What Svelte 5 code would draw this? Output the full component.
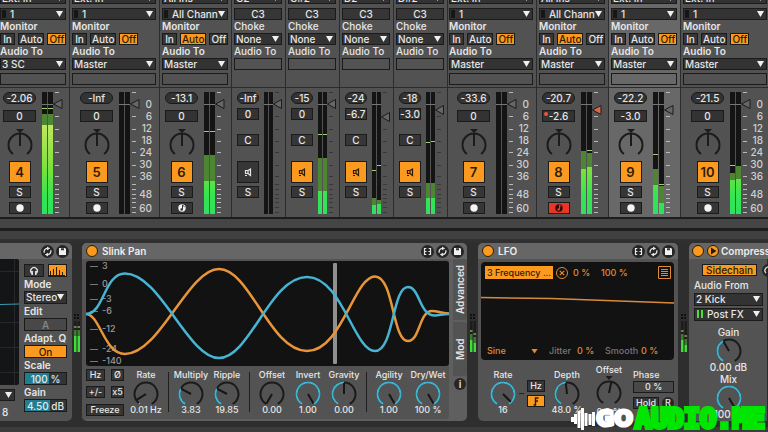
<script>
  const audio = (name, o) => ({ kind: 'audio', name, from: 'Ext. In', chan: '1', mon: 'Off', to: 'Master', pan: 0, fader: '0', fy: 12, l: {}, r: {}, ...o });
  const pad = (note, o) => ({ kind: 'pad', from: note, on: true, fader: '0', fy: 12, l: {}, r: {}, ...o });

  // Meter values are pixels below the top of the 122px meter: peak line, dim bar, bright bar.
  const tracks = [
    audio('4', { to: '3 SC', db: '-2.06', l: { p: 16, d: 22, b: 33 }, r: { p: 16, d: 22, b: 33 } }),
    audio('5', { db: '-Inf', wide: true }),
    audio('6', { from: 'All Ins', chan: 'All Channels', mon: 'Auto', midi: true, db: '-13.1', l: { p: 39, d: 63, b: 89 }, r: { p: 39, d: 63, b: 89 } }),
    pad('C2', { db: '-Inf', on: false }),
    pad('C#2', { db: '-15', l: { p: 42, d: 66, b: 99 }, r: { p: 42, d: 66, b: 99 } }),
    pad('D2', { db: '-24', fader: '-6.7', fy: 25, l: { p: 78, d: 106, b: 113 }, r: { p: 73, d: 108, b: 112 } }),
    pad('D#2', { db: '-18', fader: '-3.0', fy: 18, l: { p: 50, d: 91, b: 106 }, r: { p: 49, d: 91, b: 106 } }),
    audio('7', { db: '-33.6', wide: true }),
    audio('8', { from: 'All Ins', chan: 'All Channels', mon: 'Auto', midi: true, armed: true, auto: true, db: '-20.7', fader: '-2.6', fy: 18, l: { d: 59, b: 77 }, r: { p: 58, d: 61, b: 75 } }),
    audio('9', { db: '-22.2', fader: '-3.0', fy: 18, selected: true, l: { p: 62, d: 77, b: 93 }, r: { p: 92, d: 94, b: 111 } }),
    audio('10', { db: '-21.5', wide: true, l: { p: 73, d: 81, b: 88 }, r: { d: 74, b: 87 } })
  ];
  const scale = ['0', '6', '12', '18', '24', '30', '36', '48', '60'];
  const ticks = [0, 24, 37, 49, 60, 73, 84, 92, 97, 102, 106, 110, 115, 120];

  const pt = (a, r) => `${(Math.sin(a * Math.PI / 180) * r).toFixed(2)} ${(-Math.cos(a * Math.PI / 180) * r).toFixed(2)}`;
  const arc = (a, b, r = 11.5) => `M${pt(a, r)}A${r} ${r} 0 ${b - a > 180 ? 1 : 0} 1 ${pt(b, r)}`;

  const slink = [
    { n: 'Rate', v: '0.01 Hz', a: -122, f: -142 },
    null,
    { n: 'Multiply', v: '3.83', a: -62, f: -62 },
    { n: 'Ripple', v: '19.85', a: -62, f: -62 },
    null,
    { n: 'Offset', v: '0.00', a: -150 },
    { n: 'Invert', v: '1.00', a: 150, f: 150 },
    { n: 'Gravity', v: '0.00', a: 0, f: 0 },
    null,
    { n: 'Agility', v: '1.00', a: 150, f: 150 },
    { n: 'Dry/Wet', v: '100 %', a: 150, f: 150, wide: true }
  ];
  const grid = [['3', 5], ['0', 23], ['-3', 38], ['-6', 50], ['-12', 68], ['-24', 88], ['-140', 100]];
</script>

{#snippet select(label, value, led)}
  <span class="select">
    {#if led}<i class="led"></i>{/if}
    <select aria-label={label} class:indent={led}><option>{value}</option></select>
  </span>
{/snippet}

{#snippet dial(name, angle, fill)}
  <span class="dial">
    <svg viewBox="-13 -13 26 26" width="26" height="26">
      <path d={arc(-150, 150)} fill="none" stroke="#1b1b1b" stroke-width="2" />
      {#if fill !== undefined}<path d={arc(-150, fill)} fill="none" stroke="#3fb3cf" stroke-width="2" />{/if}
      <path d="M0 0L{pt(angle, 11)}" stroke="#161616" stroke-width="2" />
    </svg>
    <input type="range" min="-150" max="150" value={angle} aria-label={name} />
  </span>
{/snippet}

{#snippet knob(k)}
  <div class="knob" class:wide={k.wide}>
    <span>{k.n}</span>
    {@render dial(k.n, k.a, k.f)}
    <span>{k.v}</span>
  </div>
{/snippet}

{#snippet fit()}
  <button class="round" aria-label="Unfold">
    <svg viewBox="0 0 13 13"><path d="M5.300 3.500H3.500v6h1.800M7.700 3.500h1.800v6H7.700M3.500 6.500h2M7.500 6.500h2" fill="none" stroke="#e6e6e6" stroke-width="1.200" /></svg>
  </button>
{/snippet}

{#snippet tools()}
  <button class="round" aria-label="Hot-swap">
    <svg viewBox="0 0 13 13"><path d="M3.3 7.8A3.3 3.3 0 0 1 6.3 3.3M9.7 5.2a3.3 3.3 0 0 1-3 4.5" fill="none" stroke="#e6e6e6" stroke-width="1.3" /><path d="M6 1.4l3.2 2L6 5.3zM7 7.7v3.9l-3.2-2z" fill="#e6e6e6" /></svg>
  </button>
  <button class="round" aria-label="Save preset">
    <svg viewBox="0 0 13 13"><path d="M3 3h6l1 1v6H3z" fill="#f0f0f0" /><path d="M5 3.200h3v2H5z" fill="#333" /></svg>
  </button>
{/snippet}

{#snippet level(a, b)}
  <svg class="level" viewBox="0 0 8 40" width="8" height="40">
    <path d="M1 2h6M1 5h6" stroke="#111" stroke-width="2" stroke-dasharray="2 1" />
    <path d="M1 8h2.500v31H1zM4.500 8H7v31H4.500z" fill="#1c1c1c" />
    <path d="M1 {a - 6}h2.500v6H1zM4.500 {b - 6}H7v6H4.500z" fill="#3f7a32" />
    <path d="M1 {a}h2.500V39H1zM4.500 {b}H7V39H4.500z" fill="#3fdc3a" />
    <path d="M1 {a - 9}h2.500M4.500 {b - 9}H7" stroke="#cfe08a" />
  </svg>
{/snippet}

{#snippet channel(x, w, m)}
  {#if m.d}
    <rect {x} y={m.d} width={w} height={122 - m.d} fill="#4d8632" />
    <rect {x} y={m.b} width={w} height={122 - m.b} fill="url(#vu)" />
  {/if}
  {#if m.p}<rect {x} y={m.p} width={w} height="1" fill="#9fd070" />{/if}
{/snippet}

<div class="live">
  <main class="mixer">
    {#each tracks as t}
      <section class="track {t.kind}" class:wide={t.wide} class:selected={t.selected}>
        <div class="io">
          {@render select('Input type', t.from)}
          {#if t.kind === 'audio'}
            <div class="gap4">{@render select('Input channel', t.chan, true)}</div>
            <span class="cap">Monitor</span>
            <div class="monitor">
              {#each ['In', 'Auto', 'Off'] as m}<button class="btn" class:on={t.mon === m}>{m}</button>{/each}
            </div>
            <span class="cap">Audio To</span>
            {@render select('Output', t.to)}
            <div class="slot gap3"></div>
          {:else}
            <button class="btn gap4">C3</button>
            <span class="cap light">Choke</span>
            {@render select('Choke group', 'None')}
            <span class="cap light">Audio To</span>
            <div class="slot"></div>
          {/if}
        </div>
        <div class="mix">
          <div class="controls">
            <span class="pill">{t.db}</span>
            <span class="value">
              <input aria-label="Volume" value={t.fader} />
              {#if t.auto}<i class="dot"></i>{/if}
            </span>
            {#if t.kind === 'audio'}
              <span class="dial pan">
                <svg viewBox="-15 -17 30 30" width="30" height="30">
                  <path d={arc(-142, 142, 11.5)} fill="none" stroke="#1b1b1b" stroke-width="2" />
                  <path d="M0 1V-11" stroke="#1b1b1b" stroke-width="2" />
                  <path d="M-4-16h8l-4 4z" fill="#1b1b1b" />
                </svg>
                <input type="range" min="-50" max="50" value="0" aria-label="Pan" />
              </span>
              <button class="btn active on">{t.name}</button>
            {:else}
              <button class="btn send">C</button>
              <button class="btn active" class:on={t.on} aria-label="Pad on">
                <svg viewBox="0 0 12 12" width="12" height="12"><path d="M3.500 4.500h2.500v3H3.500zM6 4.500l2.500-1.500v6.500L6 7.500" fill="none" stroke="currentColor" stroke-width="1.200" /><path d="M3 9.500h2" stroke="currentColor" /></svg>
              </button>
            {/if}
            <button class="btn solo">S</button>
            {#if t.kind === 'audio'}
              <button class="btn rec" class:armed={t.armed} aria-label="Arm">
                <svg viewBox="0 0 10 10" width="10" height="10">
                  <circle cx="5" cy="5" r="3.700" fill="currentColor" />
                  {#if t.midi}<path d="M5.500 2v4.500M5.500 2.200l2 1.500" stroke={t.armed ? '#f03a2c' : '#333'} stroke-width="1" fill="none" /><circle cx="4.600" cy="6.500" r="1.200" fill={t.armed ? '#f03a2c' : '#333'} />{/if}
                </svg>
              </button>
            {/if}
          </div>
          <svg class="meter" width="22" height="122" viewBox="0 0 22 122">
            <defs>
              <linearGradient id="vu" gradientUnits="userSpaceOnUse" x1="0" x2="0" y1="30" y2="122">
                <stop offset="0" stop-color="#c4e660" /><stop offset=".5" stop-color="#7be23c" /><stop offset=".8" stop-color="#35e550" /><stop offset="1" stop-color="#2fe062" />
              </linearGradient>
            </defs>
            {#if t.kind === 'audio'}
              <path d="M0 0h5v122H0zM6 0h5v122H6z" fill="#141414" />
              {@render channel(0, 5, t.l)}
              {@render channel(6, 5, t.r)}
              {#each ticks as y}<rect x="13" {y} width="4" height="1" fill="#b9b9b9" />{/each}
              <path d="M0 12.500h11" stroke="#777" />
              <path d="M11.500 {t.fy}l8.500-4.500v9z" fill={t.auto ? '#d8694a' : '#666'} stroke="#1b1b1b" />
            {:else}
              <path d="M0 0h4v122H0zM5 0h4v122H5z" fill="#141414" />
              {@render channel(0, 4, t.l)}
              {@render channel(5, 4, t.r)}
              {#each ticks as y}<rect x="11" {y} width="4" height="1" fill="#383838" />{/each}
              <path d="M0 12.500h9" stroke="#777" />
              <path d="M9.500 {t.fy}l8-4.500v9z" fill="#666" stroke="#1b1b1b" />
            {/if}
          </svg>
          {#if t.wide}
            <div class="scale">{#each scale as s}<span>{s}</span>{/each}</div>
          {/if}
        </div>
      </section>
    {/each}
  </main>
  <div class="strip"></div>
  <div class="strip second"></div>

  <div class="devices">
    <section class="device eq">
      <header><span class="grow"></span>{@render tools()}</header>
      <div class="eqbody">
        <div class="eqleft">
          <svg viewBox="0 0 19 126" width="19" height="126">
            <path d="M0 0h17q2 0 2 2v122q0 2-2 2H0z" fill="#131516" />
            <path d="M14.500 0v126M0 12.500h19M0 63.500h19M0 88.500h19M0 113.500h19" stroke="#25292b" />
            <path d="M0 45.500L19 45" stroke="#3a9cb5" />
          </svg>
          <span class="arrowbox"></span>
          <span class="eight">8</span>
        </div>
        <div class="eqside">
          <div class="pair">
            <button class="btn" aria-label="Audition"><svg viewBox="0 0 12 12" width="12" height="12"><path d="M3.500 8A3.300 3.300 0 1 1 8.500 8" fill="none" stroke="#ddd" stroke-width="1.300" /><path d="M2.500 6h2.500v4H3.500zM7 6h2.500L8.500 10H7z" fill="#ddd" /></svg></button>
            <button class="btn on" aria-label="Analyzer"><svg viewBox="0 0 16 12" width="16" height="12"><path d="M1.500 10V6M4.500 10V4M7.500 10V2M10.500 10V5M13.500 10V7M0 10.500h16" stroke="#2b1c08" /></svg></button>
          </div>
          <span class="cap">Mode</span>
          {@render select('Mode', 'Stereo')}
          <span class="cap">Edit</span>
          <button class="btn off">A</button>
          <span class="cap">Adapt. Q</span>
          <button class="btn on">On</button>
          <span class="cap">Scale</span>
          <input class="bar" style="--fill:58%" value="100 %" aria-label="Scale" />
          <span class="cap">Gain</span>
          <input class="bar" style="--fill:62%" value="4.50 dB" aria-label="Gain" />
        </div>
      </div>
    </section>

    {@render level(23, 23)}

    <section class="device slink">
      <header>
        <button class="power" aria-label="Slink Pan on"></button><h2>Slink Pan</h2><span class="grow"></span>
        {@render fit()}{@render tools()}
      </header>
      <div class="slinkbody">
        <div class="panel">
          <svg viewBox="0 0 363 105" width="363" height="105">
            <rect width="363" height="105" rx="3" fill="#121212" />
            {#each grid as [g, y]}
              <path d="M4 {y + 0.5}h8" stroke="#777" /><text x="16" y={y + 3} font-size="9" fill="#9a9a9a">{g}</text>
            {/each}
            <rect x="247" y="2" width="4" height="101" rx="1" fill="#909090" />
            <g fill="none" stroke-width="2.500">
              <path stroke="#e8953a" d="M0 53C14 53 18 93 39 93C74 93 102 8 133 8C164 8 184 90 221 90C256 90 268 15.500 289 15.500C308 15.500 306 80 322 80C334 80 333 50 346 50C352 50 354 52 363 52.500" />
              <path stroke="#46b4d2" d="M0 53C18 53 18 12.500 39 12.500C74 12.500 102 97 133 97C164 97 184 16 221 16C256 16 268 90 289 90C308 90 306 26 322 26C334 26 333 54.500 349 54.500C354 54.500 356 53 363 53" />
            </g>
          </svg>
          <div class="row">
            <div class="toggles">
              <button class="btn">Hz</button><button class="btn small">Ø</button>
              <button class="btn">+/-</button><button class="btn small">x5</button>
              <button class="btn full">Freeze</button>
            </div>
            {#each slink as k}{#if k}{@render knob(k)}{:else}<i class="rule"></i>{/if}{/each}
          </div>
        </div>
        <div class="tabs">
          <button>Advanced</button><button class="mod">Mod</button>
          <span class="info">i</span>
        </div>
      </div>
    </section>

    {@render level(27, 30)}

    <section class="device lfo">
      <header>
        <button class="power" aria-label="LFO on"></button><h2>LFO</h2><span class="grow"></span>
        {@render fit()}{@render tools()}
      </header>
      <div class="screen">
        <div class="line">
          <button class="map">3 Frequency ...</button>
          <svg viewBox="0 0 14 14" width="14" height="14"><circle cx="7" cy="7" r="5.500" fill="none" stroke="#e08a35" /><path d="M4.800 4.800l4.400 4.400M9.200 4.800L4.800 9.200" stroke="#e08a35" stroke-width="1.200" /></svg>
          <span class="zero">0 %</span><span>100 %</span><span class="grow"></span>
          <svg viewBox="0 0 13 13" width="13" height="13"><path d="M.5.500h12v12H.5zM3 3.500h7M3 5.500h7M3 7.500h7M3 9.500h7" fill="none" stroke="#e08a35" /></svg>
        </div>
        <svg class="wave" viewBox="0 0 193 66" width="193" height="66"><path d="M0 17.500L70 18.500L193 23" fill="none" stroke="#d88a3c" stroke-width="1.500" /></svg>
        <div class="line low">
          <span class="sine">Sine</span><i class="tri"></i>
          <span class="dim">Jitter</span><span class="zero">0 %</span>
          <span class="dim smooth">Smooth</span><span>0 %</span>
        </div>
      </div>
      <div class="row">
        {@render knob({ n: 'Rate', v: '16', a: 135, f: 150 })}
        <i class="dash"></i>
        <div class="stack">
          <button class="btn">Hz</button>
          <button class="btn on" aria-label="Sync"><svg viewBox="0 0 8 10" width="8" height="10"><path d="M1.500 9h2V2h3M3.500 5H6" fill="none" stroke="#2b1c08" stroke-width="1.400" /></svg></button>
        </div>
        {@render knob({ n: 'Depth', v: '48.0 %', a: -6, f: -6 })}
        <div class="offset">
          <span>Offset</span><i class="mark"></i>
          {@render dial('Offset', 12)}
          <span>0.0 %</span>
        </div>
        <div class="phase">
          <label for="phase">Phase</label>
          <input id="phase" value="0 %" />
          <div><button class="btn">Hold</button><button class="round r">R</button></div>
        </div>
      </div>
    </section>

    {@render level(27, 32)}

    <section class="device comp">
      <header>
        <button class="power" aria-label="Compressor on"></button>
        <button class="power play" aria-label="Fold sidechain"><svg viewBox="0 0 12 12" width="12" height="12"><path d="M4 2.500L9.500 6L4 9.500z" fill="#1b1b1b" /></svg></button>
        <h2>Compressor</h2>
      </header>
      <div class="compbody">
        <div class="side">
          <div class="chainrow">
            <button class="btn on chain">Sidechain</button>
            <button class="round" aria-label="Sidechain listen"><svg viewBox="0 0 13 13"><path d="M4 9A3.500 3.500 0 1 1 9 9" fill="none" stroke="#ddd" stroke-width="1.300" /></svg></button>
          </div>
          <span class="cap">Audio From</span>
          {@render select('Audio From', '2 Kick')}
          <div class="tap">{@render select('Tap point', 'Post FX', true)}</div>
          <div class="cknobs">
            {@render knob({ n: 'Gain', v: '0.00 dB', a: -30, f: -30 })}
            {@render knob({ n: 'Mix', v: '100 %', a: 150, f: 150 })}
          </div>
        </div>
      </div>
    </section>
  </div>

  <div class="logo">
    <svg viewBox="0 0 24 22" width="24" height="22"><path d="M1.500 9v5M4.500 6v10M8 3v17M11.500 0v22M15 5v13M19 6v11M22.500 4v14" stroke="#fff" stroke-width="3" /></svg>
    <span class="go">GO</span><span class="me">AUDIO.ME</span>
  </div>
</div>

<style>
  :global(body) { margin: 0; overflow: hidden; background: #3c3c3c; }
  .live {
    position: relative; min-height: 100vh; overflow: hidden; background: #3c3c3c; color: #e6e6e6;
    font: 500 10px/12px Inter, "Open Sans", sans-serif; white-space: nowrap;
  }
  .live *, .live *::after { box-sizing: border-box; }
  button, input, select {
    font: inherit; color: inherit; margin: 0; padding: 0; border: 0; border-radius: 0; background: none;
    appearance: none; min-width: 0; outline: 0;
  }
  svg { display: block; flex: none; }
  i { display: block; flex: none; }
  .grow { flex: 1; }

  .btn {
    display: flex; align-items: center; justify-content: center; height: 12px; overflow: hidden;
    border: 1px solid #1b1b1b; background: #363636; line-height: 10px;
  }
  .btn.on { background: #fb9a1e; color: #2b1c08; }
  .btn.off { color: #8a8a8a; background: #484848; }
  .select { position: relative; display: flex; height: 12px; border: 1px solid #1b1b1b; background: #333; }
  .select::after {
    content: ""; position: absolute; right: 2px; top: 2px; width: 7px; height: 6px;
    background: #f0f0f0; clip-path: polygon(0 0, 100% 0, 50% 100%);
  }
  .select select { width: 100%; height: 10px; line-height: 10px; padding: 0 9px 0 1px; overflow: hidden; }
  .select select.indent { padding-left: 4px; }
  .led { width: 4px; height: 8px; margin: 1px 0 0 1px; background: #161616; }
  .cap { display: block; height: 13px; line-height: 13px; font-weight: 600; }
  .cap.light { font-weight: 500; }
  .gap4 { margin-top: 4px; }
  .gap3 { margin-top: 3px; }

  .mixer { display: flex; margin: -8px 0 0 -2px; background: #525252; }
  .track { flex: 0 0 72px; min-width: 0; border-right: 1px solid #2c2c2c; }
  .track.wide { flex-basis: 90px; }
  .track.pad { flex-basis: 54px; }
  .track.pad + .audio { margin-left: -1px; }
  .track:last-child { flex-grow: 1; }
  .track.selected { background: #686868; }
  .io { display: flex; flex-direction: column; height: 95px; padding: 0 3px 0 2px; }
  .monitor { display: flex; gap: 3px; }
  .monitor .btn { flex: none; min-width: 15px; padding: 0 1px; }
  .slot { height: 12px; border: 1px solid #1b1b1b; }
  .mix { display: flex; height: 130px; padding: 4px 0 0 5px; border-top: 1px solid #2c2c2c; }
  .wide .mix { padding-left: 10px; }
  .controls { display: flex; flex: none; flex-direction: column; align-items: center; width: 33px; margin-right: 6px; }
  .pad .controls { width: 22px; margin-right: 5px; }
  .pill {
    width: 100%; height: 12px; line-height: 10px; text-align: center; border: 1px solid #1b1b1b;
    border-radius: 6px; background: #333; margin-bottom: 6px;
  }
  .pad .pill { margin-bottom: 4px; }
  .value { position: relative; display: flex; width: 100%; height: 12px; border: 1px solid #1b1b1b; background: #333; }
  .value input { width: 100%; height: 10px; text-align: center; }
  .dot { position: absolute; left: 1px; top: 1px; width: 4px; height: 4px; border-radius: 2px; background: #f0553a; }
  .dial { position: relative; display: block; width: 26px; height: 26px; }
  .dial input { position: absolute; inset: 0; width: 100%; height: 100%; opacity: 0; }
  .dial.pan { width: 30px; height: 30px; margin: 6px 0 3px; }
  .controls .btn { width: 22px; }
  .controls .active { height: 22px; font-size: 13px; font-weight: 600; }
  .controls .send { margin: 14px 0 15px; }
  .controls .solo { margin: 3px 0 4px; }
  .rec { color: #f4f4f4; }
  .rec.armed { background: #e83526; color: #2a0a08; }
  .scale { width: 19px; padding: 6px 3px 0 0; text-align: right; color: #cfcfcf; margin-left: -5px; }
  .scale span { display: block; }
  .scale span:nth-child(8) { margin: 6px 0 2px; }

  .strip { height: 11px; border-top: 2px solid #1d1d1d; background: #454545; }
  .strip.second { height: 15px; border-top: 3px solid #1d1d1d; background: #404040; border-bottom: 4px solid #303030; }

  .devices { display: flex; align-items: flex-start; height: 184px; background: #2e2e2e; }
  .device { flex: none; height: 178px; border-radius: 5px; background: #535353; overflow: hidden; }
  header { display: flex; align-items: center; gap: 2px; height: 16px; padding: 0 3px 0 4px; background: #666; }
  h2 { margin: 0 0 0 2px; font-size: 10px; line-height: 14px; font-weight: 600; color: #eee; }
  .round { width: 13px; height: 13px; flex: none; border-radius: 7px; background: #262626; }
  .power { width: 12px; height: 12px; flex: none; border-radius: 6px; border: 1px solid #2b1c08; background: #fb9a1e; }
  .power.play { margin-left: 3px; display: flex; align-items: center; justify-content: center; }
  .level { margin: 70px 1px 0; }
  .level:nth-of-type(n + 2) { margin: 70px 1px 0 2px; }

  .eq { width: 72px; border-radius: 0 5px 5px 0; }
  .eqbody { display: flex; gap: 5px; }
  .eqleft { width: 19px; }
  .arrowbox { display: block; position: relative; width: 15px; height: 12px; margin: 4px 0 6px; border: 1px solid #1b1b1b; border-left: 0; background: #333; }
  .arrowbox::after { content: ""; position: absolute; right: 2px; top: 2px; width: 7px; height: 6px; background: #f0f0f0; clip-path: polygon(0 0, 100% 0, 50% 100%); }
  .eight { display: block; padding-left: 2px; line-height: 10px; }
  .eqside { width: 43px; display: flex; flex-direction: column; padding-top: 5px; }
  .eqside .cap { height: 14px; line-height: 14px; }
  .eqside .btn, .eqside .bar, .eqside :global(.select) { height: 13px; }
  .pair { display: flex; gap: 4px; }
  .pair .btn { flex: 1; }
  .bar { width: 43px; border: 1px solid #1b1b1b; text-align: center; background: linear-gradient(90deg, #1f7f92 var(--fill), #303638 var(--fill)); }

  .slink { width: 385px; background: #5f5f5f; }
  .slinkbody { display: flex; }
  .panel { flex: 1; padding: 2px 0 0 4px; border-radius: 0 0 4px 0; background: #535353; height: 160px; margin-right: 4px; }
  .row { display: flex; font-weight: 400; }
  .panel .row { padding-top: 3px; }
  .toggles { display: flex; flex: none; flex-wrap: wrap; gap: 4px; justify-content: space-between; width: 38px; height: 48px; margin-right: 4px; }
  .toggles .btn { width: 19px; }
  .toggles .small { width: 13px; }
  .toggles .full { width: 38px; }
  .rule { width: 1px; height: 40px; margin: 3px 4px 0; background: #1f1f1f; }
  .knob { display: flex; flex-direction: column; align-items: center; flex: none; width: 36px; font-size: 9px; font-weight: 500; }
  .knob.wide { width: 42px; }
  .knob .dial { margin-bottom: -3px; }
  .toggles, .stack, .screen, .offset, .phase { font-size: 9px; font-weight: 500; }
  .tabs { display: flex; flex: none; flex-direction: column; align-items: center; width: 14px; font-weight: 600; }
  .tabs button { writing-mode: vertical-rl; transform: rotate(180deg); width: 14px; height: 61px; border-radius: 3px 0 0 3px; background: #535353; line-height: 14px; text-align: center; }
  .tabs .mod { height: 54px; margin: 2px 0; }
  .info { width: 12px; height: 12px; border-radius: 6px; background: #262626; text-align: center; line-height: 12px; }

  .lfo { width: 200px; }
  .screen { margin: 3px 4px 0 3px; border-radius: 4px; background: #121212; color: #e08a35; }
  .line { display: flex; align-items: center; padding: 3px 3px 0 4px; height: 18px; }
  .map { width: 68px; height: 13px; line-height: 13px; background: #fb9a1e; color: #2b1c08; margin-right: 2px; overflow: hidden; }
  .zero { width: 32px; padding-left: 4px; }
  .wave { width: 100%; }
  .low { height: 14px; padding: 0 3px 4px 6px; }
  .sine { width: 44px; }
  .tri { width: 7px; height: 5px; margin-right: 11px; background: #e08a35; clip-path: polygon(0 0, 100% 0, 50% 100%); }
  .dim { color: #787878; width: 24px; }
  .dim.smooth { width: 36px; }
  .lfo .row { padding: 9px 0 0 7px; }
  .dash { width: 5px; height: 1px; margin: 24px 3px 0 -2px; background: #222; }
  .stack { display: flex; flex-direction: column; gap: 3px; width: 18px; padding-top: 11px; margin-right: 4px; }
  .offset { display: flex; flex-direction: column; align-items: center; width: 48px; margin-top: -5px; }
  .mark { width: 7px; height: 4px; background: #1b1b1b; clip-path: polygon(0 0, 100% 0, 50% 100%); }
  .phase { width: 41px; }
  .phase label { display: block; height: 12px; line-height: 12px; }
  .phase input { width: 41px; height: 12px; border: 1px solid #1b1b1b; background: #484848; text-align: center; }
  .phase div { display: flex; justify-content: space-between; align-items: center; margin-top: 4px; }
  .phase .btn { width: 26px; }
  .r { width: 12px; height: 12px; line-height: 12px; }

  .comp { flex: 1 0 81px; border-radius: 5px 0 0 5px; }
  .comp header { gap: 0; padding-left: 3px; }
  .compbody { display: flex; padding-left: 5px; }
  .side { width: 74px; height: 162px; border-right: 1px solid #2c2c2c; padding: 5px 4px 0 0; }
  .chainrow { display: flex; gap: 5px; height: 12px; padding-left: 8px; }
  .chain { flex: none; width: 55px; height: 12px; }
  .side .cap { margin: 3px 0 1px; font-weight: 500; }
  .side :global(.select) { height: 13px; }
  .tap { margin-top: 2px; }
  .tap :global(.led) { width: 6px; height: 8px; background: linear-gradient(90deg, #4fdc3a 2px, #333 2px, #333 4px, #4fdc3a 4px); margin-left: 2px; }
  .cknobs { display: flex; flex-direction: column; align-items: center; padding-top: 5px; }
  .cknobs .knob { font-size: 10px; }

  .logo { position: absolute; right: 0; bottom: 1px; display: flex; align-items: center; height: 24px; font-family: "DejaVu Sans Mono", monospace; font-weight: 700; font-size: 27px; line-height: 24px; }
  .go { font-family: "DejaVu Sans", sans-serif; font-size: 22px; color: #fff; -webkit-text-stroke: 3px #fff; paint-order: stroke; margin-left: 1px; }
  .me { color: #00e600; -webkit-text-stroke: 4px #00e600; paint-order: stroke; margin: 0 3px 0 2px; }
</style>
